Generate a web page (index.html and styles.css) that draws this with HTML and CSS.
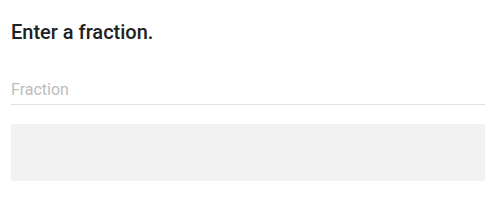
FILE: index.html
```html
<!DOCTYPE html>
<html lang="en">
<head>
  <meta charset="UTF-8">
  <meta name="viewport" content="width=device-width, initial-scale=1.0">
  <title>Fraction</title>
  <link rel="stylesheet" href="styles.css">
</head>
<body>

  <h1 class="question">Enter a fraction.</h1>

  <!-- Campo de respuesta -->
  <div class="field">
    <input type="text" class="field-input" placeholder="Fraction">
  </div>

  <!-- Zona de resultado -->
  <div class="result"></div>

</body>
</html>
```

FILE: styles.css
```css
body {
  font-family: Roboto, Arial, sans-serif;
  background-color: #fff;
  margin: 0;
  padding: 0 13px 0 11px;
}
.question {
  margin: 20px 0 0;
  font-size: 20px;
  line-height: 25px;
  font-weight: 500;
  color: #212121;
}
.field {
  margin-top: 27px;
  padding: 8px 0 4px;
  border-bottom: 1px solid #e0e0e0;
}
.field-input {
  display: block;
  width: 100%;
  border: none;
  outline: none;
  padding: 0;
  margin: 0;
  font-family: inherit;
  font-size: 16px;
  line-height: 20px;
  height: 20px;
  color: #212121;
  background: transparent;
}
.field-input::placeholder {
  color: #bdbdbd;
}
.result {
  margin-top: 19px;
  height: 57px;
  background-color: #f2f2f2;
  border-radius: 2px;
}
```
